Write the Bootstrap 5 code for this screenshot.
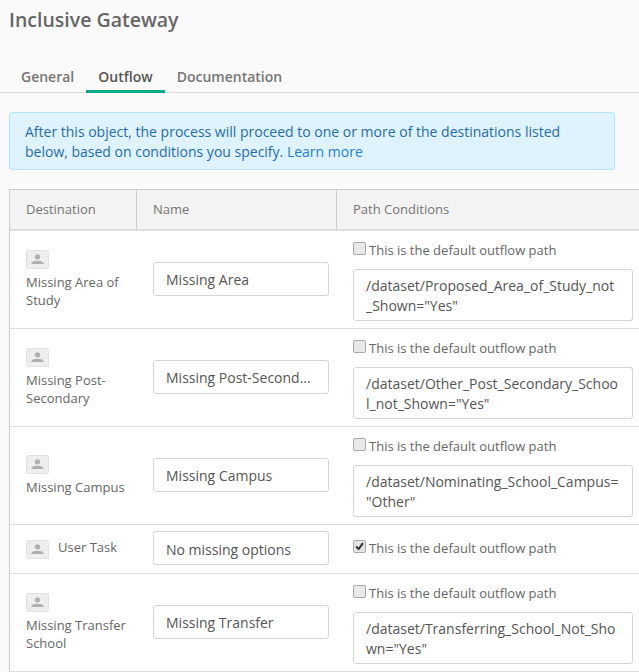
<!DOCTYPE html>
<html lang="en">

<head>
  <meta charset="UTF-8">
  <meta name="viewport" content="width=device-width, initial-scale=1.0">
  <title>Inclusive Gateway</title>
  <link href="https://cdn.jsdelivr.net/npm/bootstrap@5.3.0/dist/css/bootstrap.min.css" rel="stylesheet">
  <style>
    body {
      background-color: #fafafa;
      font-family: "Open Sans", sans-serif;
      font-size: 13px;
      color: #666;
      overflow: hidden;
      height: 672px;
    }

    .panel-title {
      font-size: 19.5px;
      font-weight: 600;
      line-height: 24px;
      color: #666;
      margin: 0;
      padding: 8px 0 0 9px;
    }

    .tab-bar {
      margin-top: 29px;
      padding-left: 9px;
      height: 32px;
      border-bottom: 1px solid #ddd;
      flex-wrap: nowrap;
    }

    .tab-bar .nav-link {
      font-size: 14px;
      font-weight: 600;
      line-height: 20px;
      color: #757575;
      padding: 6px 12px 0;
      height: 32px;
      border-bottom: 3px solid transparent;
    }

    .tab-bar .nav-link.active {
      color: #555;
      border-bottom-color: #0aa98b;
    }

    .info-box {
      margin: 19px 24px 0 9px;
      padding: 9px 15px;
      height: 58px;
      font-size: 14px;
      line-height: 20px;
      color: #1f6cab;
      background-color: #dff3fe;
      border: 1px solid #b3e5fc;
      border-radius: 3px;
    }

    .info-box a {
      color: #1c7fd6;
      text-decoration: none;
    }

    .flow-wrap {
      margin: 19px 0 0 9px;
      width: 640px;
    }

    .flow-table {
      table-layout: fixed;
      width: 640px;
      margin: 0;
      border-collapse: separate;
      border-spacing: 0;
      border-left: 1px solid #ccc;
    }

    .flow-table th {
      height: 42px;
      padding: 0 16px;
      font-size: 13px;
      font-weight: 400;
      color: #757575;
      background-color: #f3f3f3;
      border-top: 1px solid #ccc;
      border-bottom: 2px solid #ddd;
      border-right: 1px solid #ccc;
      vertical-align: middle;
    }

    .flow-table td {
      padding: 0 16px;
      background-color: #fff;
      border-bottom: 1px solid #ddd;
      vertical-align: middle;
      color: #666;
    }

    .flow-table .row-tall td {
      height: 98px;
    }

    .flow-table .row-tall td.path-cell {
      padding-top: 3px;
    }

    .flow-table .row-short td {
      height: 49px;
    }

    .flow-table td.dest-cell {
      padding-right: 10px;
      font-size: 13px;
      line-height: 18px;
    }

    .col-dest {
      width: 127px;
    }

    .col-name {
      width: 200px;
    }

    .person-icon {
      display: block;
      width: 23px;
      height: 19px;
      border-radius: 2px;
      background-color: #eee;
      border: 1px solid #e2e2e2;
      margin-bottom: 4px;
    }

    .dest-inline .person-icon {
      margin: 0 9px 0 0;
      flex: none;
    }

    .dest-inline span {
      margin-bottom: 5px;
    }

    .flow-table .form-control {
      font-size: 14px;
      line-height: 20px;
      color: #555;
      background-color: #fff;
      border: 1px solid #d5d5d5;
      border-radius: 3px;
      box-shadow: none;
    }

    .name-input {
      width: 176px;
      height: 34px;
      padding: 7px 12px 5px;
      margin-bottom: 2px;
      text-overflow: ellipsis;
    }

    .path-input {
      display: block;
      width: 280px;
      height: 52px;
      min-height: 0;
      padding: 6px 12px;
      resize: none;
      overflow: hidden;
      word-break: break-all;
    }

    .default-check {
      font-size: 13px;
      line-height: 18px;
      margin-bottom: 10px;
      color: #666;
    }

    .row-short .default-check {
      margin-bottom: 2px;
    }

    .default-check .form-check-input {
      width: 13px;
      height: 13px;
      margin: 0 3px 4px 0;
      background-color: #e9e9e9;
      border: 1px solid #aaa;
      border-radius: 2px;
      box-shadow: none;
      flex: none;
    }

    .default-check .form-check-input:checked {
      background-color: #e4e4e4;
      background-image: url("data:image/svg+xml,%3csvg xmlns='http://www.w3.org/2000/svg' viewBox='0 0 13 13'%3e%3cpath fill='none' stroke='%23333' stroke-width='2.4' d='M2.500 6.500l3 3 5-7'/%3e%3c/svg%3e");
      border-color: #aaa;
    }
  </style>
</head>

<body>
  <h1 class="panel-title">Inclusive Gateway</h1>

  <ul class="nav tab-bar">
    <li class="nav-item"><a class="nav-link" href="#">General</a></li>
    <li class="nav-item"><a class="nav-link active" href="#">Outflow</a></li>
    <li class="nav-item"><a class="nav-link" href="#">Documentation</a></li>
  </ul>

  <div class="info-box">
    After this object, the process will proceed to one or more of the destinations listed
    below, based on conditions you specify. <a href="#">Learn more</a>
  </div>

  <div class="flow-wrap">
    <table class="flow-table">
      <thead>
        <tr>
          <th class="col-dest">Destination</th>
          <th class="col-name">Name</th>
          <th>Path Conditions</th>
        </tr>
      </thead>
      <tbody>
        <tr class="row-tall">
          <td class="dest-cell">
            <svg class="person-icon" viewBox="0 0 23 19"><circle cx="11.500" cy="6.500" r="3" fill="#b0b0b0"/><path d="M4.500 14.500c0-3 4-3.700 7-3.700s7 .7 7 3.700z" fill="#b0b0b0"/></svg>
            Missing Area of Study
          </td>
          <td><input class="form-control name-input" type="text" value="Missing Area"></td>
          <td class="path-cell">
            <div class="default-check d-flex align-items-center"><input class="form-check-input" type="checkbox"><span>This is the default outflow path</span></div>
            <textarea class="form-control path-input">/dataset/Proposed_Area_of_Study_not_Shown="Yes"</textarea>
          </td>
        </tr>
        <tr class="row-tall">
          <td class="dest-cell">
            <svg class="person-icon" viewBox="0 0 23 19"><circle cx="11.500" cy="6.500" r="3" fill="#b0b0b0"/><path d="M4.500 14.500c0-3 4-3.700 7-3.700s7 .7 7 3.700z" fill="#b0b0b0"/></svg>
            Missing Post-Secondary
          </td>
          <td><input class="form-control name-input" type="text" value="Missing Post-Secondary School"></td>
          <td class="path-cell">
            <div class="default-check d-flex align-items-center"><input class="form-check-input" type="checkbox"><span>This is the default outflow path</span></div>
            <textarea class="form-control path-input">/dataset/Other_Post_Secondary_School_not_Shown="Yes"</textarea>
          </td>
        </tr>
        <tr class="row-tall">
          <td class="dest-cell">
            <svg class="person-icon" viewBox="0 0 23 19"><circle cx="11.500" cy="6.500" r="3" fill="#b0b0b0"/><path d="M4.500 14.500c0-3 4-3.700 7-3.700s7 .7 7 3.700z" fill="#b0b0b0"/></svg>
            Missing Campus
          </td>
          <td><input class="form-control name-input" type="text" value="Missing Campus"></td>
          <td class="path-cell">
            <div class="default-check d-flex align-items-center"><input class="form-check-input" type="checkbox"><span>This is the default outflow path</span></div>
            <textarea class="form-control path-input">/dataset/Nominating_School_Campus=
"Other"</textarea>
          </td>
        </tr>
        <tr class="row-short">
          <td class="dest-cell">
            <div class="dest-inline d-flex align-items-center">
              <svg class="person-icon" viewBox="0 0 23 19"><circle cx="11.500" cy="6.500" r="3" fill="#b0b0b0"/><path d="M4.500 14.500c0-3 4-3.700 7-3.700s7 .7 7 3.700z" fill="#b0b0b0"/></svg>
              <span>User Task</span>
            </div>
          </td>
          <td><input class="form-control name-input" type="text" value="No missing options"></td>
          <td>
            <div class="default-check d-flex align-items-center"><input class="form-check-input" type="checkbox" checked><span>This is the default outflow path</span></div>
          </td>
        </tr>
        <tr class="row-tall">
          <td class="dest-cell">
            <svg class="person-icon" viewBox="0 0 23 19"><circle cx="11.500" cy="6.500" r="3" fill="#b0b0b0"/><path d="M4.500 14.500c0-3 4-3.700 7-3.700s7 .7 7 3.700z" fill="#b0b0b0"/></svg>
            Missing Transfer School
          </td>
          <td><input class="form-control name-input" type="text" value="Missing Transfer"></td>
          <td class="path-cell">
            <div class="default-check d-flex align-items-center"><input class="form-check-input" type="checkbox"><span>This is the default outflow path</span></div>
            <textarea class="form-control path-input">/dataset/Transferring_School_Not_Shown="Yes"</textarea>
          </td>
        </tr>
      </tbody>
    </table>
  </div>

  <script src="https://cdn.jsdelivr.net/npm/bootstrap@5.3.0/dist/js/bootstrap.bundle.min.js"></script>
</body>

</html>
